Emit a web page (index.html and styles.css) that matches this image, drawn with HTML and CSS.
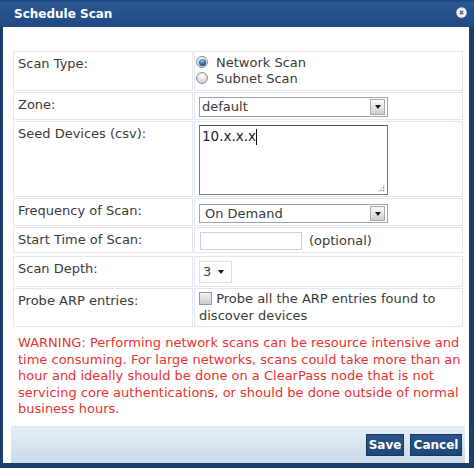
FILE: index.html
```html
<!DOCTYPE html>
<html>
<head>
<meta charset="utf-8">
<link rel="stylesheet" href="styles.css">
</head>
<body>
<div class="dialog">
  <div class="titlebar">
    <span class="title">Schedule Scan</span>
    <span class="close"><svg width="11" height="11" viewBox="0 0 11 11"><circle cx="5.5" cy="5.5" r="5.2" fill="#eef2f7"/><path d="M3.8 3.8 L7.2 7.2 M7.2 3.8 L3.8 7.2" stroke="#5a6470" stroke-width="1.3"/></svg></span>
  </div>
  <div class="panel">
    <div class="form form-a">
      <div class="label">Scan Type:</div>
      <div class="field f-type">
        <div class="opt"><span class="radio on"></span>Network Scan</div>
        <div class="opt"><span class="radio"></span>Subnet Scan</div>
      </div>
      <div class="label">Zone:</div>
      <div class="field f-zone">
        <div class="select wide zone"><span class="val">default</span><span class="arrowbox"><span class="tri"></span></span></div>
      </div>
      <div class="label">Seed Devices (csv):</div>
      <div class="field f-seed">
        <div class="textarea"><span class="ta-text">10.x.x.x</span><span class="caret"></span><span class="grip"></span></div>
      </div>
      <div class="label">Frequency of Scan:</div>
      <div class="field f-freq">
        <div class="select wide freq"><span class="val">On Demand</span><span class="arrowbox"><span class="tri"></span></span></div>
      </div>
      <div class="label">Start Time of Scan:</div>
      <div class="field f-start">
        <div class="textinput"></div><span class="hint">(optional)</span>
      </div>
    </div>
    <div class="form form-b">
      <div class="label">Scan Depth:</div>
      <div class="field f-depth">
        <div class="mini-select"><span class="val">3</span><span class="tri"></span></div>
      </div>
      <div class="label">Probe ARP entries:</div>
      <div class="field f-probe">
        <span class="checkbox"></span> Probe all the ARP entries found to discover devices
      </div>
    </div>
    <div class="warning">WARNING: Performing network scans can be resource intensive and<br>time consuming. For large networks, scans could take more than an<br>hour and ideally should be done on a ClearPass node that is not<br>servicing core authentications, or should be done outside of normal<br>business hours.</div>
    <div class="footer">
      <button class="btn save">Save</button>
      <button class="btn cancel">Cancel</button>
    </div>
  </div>
</div>
</body>
</html>
```

FILE: styles.css
```css
* { box-sizing: border-box; }
html, body { margin: 0; padding: 0; background: #fff; }
body {
  font-family: "DejaVu Sans", Verdana, sans-serif;
  font-size: 13px;
  color: #3a3a3a;
}
.dialog {
  width: 474px;
  height: 468px;
  background: #1b3e6c;
  display: flex;
  flex-direction: column;
}
.titlebar {
  height: 27px;
  flex: none;
  background: linear-gradient(#1d4276 0, #2a5791 3px, #24508a 60%, #1f4880 100%);
  display: flex;
  align-items: center;
  justify-content: space-between;
  padding: 1px 7px 0 14px;
}
.title {
  color: #fff;
  font-weight: bold;
  font-size: 12px;
}
.close { display: flex; margin-top: -3px; }
.panel {
  flex: 1;
  margin: 0 5px 5px 3px;
  background: #fff;
  display: flex;
  flex-direction: column;
  padding: 24px 4px 0 8px;
}
.form {
  display: grid;
  grid-template-columns: 180px 1fr;
  gap: 1px;
  margin: 0 2px;
}
.form-a { grid-template-rows: 40px 28px 76px 28px 26px; }
.form-b { grid-template-rows: 31px 39px; margin-top: 3px; }
.label, .field {
  border: 1px solid #e2e8f1;
}
.label {
  padding: 4px 5px 0 4px;
  line-height: 16px;
  white-space: nowrap;
}
.field { padding: 0 4px; line-height: 16px; }

.f-type { padding: 3px 4px 0 1px; }
.opt { display: flex; align-items: center; height: 16px; }
.radio {
  width: 12px; height: 12px;
  border-radius: 50%;
  border: 1px solid #8f8f8f;
  background: radial-gradient(circle at 50% 30%, #ffffff, #cfcfcf 80%);
  margin-right: 8px;
  display: inline-block;
  position: relative;
  flex: none;
  margin-top: -2px;
}
.radio.on::after {
  content: "";
  position: absolute;
  left: 1.5px; top: 1.5px;
  width: 7px; height: 7px;
  border-radius: 50%;
  background: radial-gradient(circle at 45% 30%, #9cc8f0 0, #2e6db3 45%, #0f3d75 100%);
}

.f-zone { padding-top: 4px; }
.f-freq { padding-top: 5px; }
.select {
  position: relative;
  height: 20px;
  border: 1px solid #9ea4ab;
  background: #fff;
  display: flex;
  align-items: center;
}
.select.wide { width: 189px; }
.select.freq { height: 19px; }
.zone .val { padding-left: 2px; }
.freq .val { padding-left: 5px; }
.arrowbox {
  position: absolute;
  right: 2px; top: 1px; bottom: 1px;
  width: 15px;
  border: 1px solid #a9a9a9;
  background: linear-gradient(#fafafa, #cfcfcf);
  display: flex;
  align-items: center;
  justify-content: center;
}
.tri {
  width: 0; height: 0;
  border-left: 3.5px solid transparent;
  border-right: 3.5px solid transparent;
  border-top: 4px solid #1a1a1a;
}

.f-seed { padding-top: 3px; }
.textarea {
  position: relative;
  width: 189px;
  height: 70px;
  border: 1px solid #7a7a7a;
  border-top-color: #555;
  background: #fff;
  padding: 2px 0 0 2px;
  font-size: 13.5px;
  color: #222;
  display: flex;
  align-items: flex-start;
}
.ta-text { line-height: 17px; }
.caret {
  width: 1px; height: 16px;
  background: #111;
  margin-top: 1px;
}
.grip {
  position: absolute;
  right: 2px; bottom: 2px;
  width: 8px; height: 8px;
  background:
    radial-gradient(circle, #8a8a8a 0.8px, transparent 0.9px) 0 0 / 2.6px 2.6px;
  clip-path: polygon(100% 0, 100% 100%, 0 100%);
}

.f-start { padding-top: 4px; display: flex; align-items: flex-start; }
.textinput {
  width: 102px; height: 18px;
  margin-left: 1px;
  border: 1px solid #cfcfcf;
  background: #fff;
}
.hint { margin-left: 7px; line-height: 17px; }

.f-depth { padding-top: 4px; }
.mini-select {
  width: 33px; height: 22px;
  border: 1px solid #dedede;
  background: #fff;
  display: flex;
  align-items: center;
  padding-left: 3px;
  gap: 7px;
}

.f-probe { padding-top: 1px; line-height: 17px; }
.checkbox {
  display: inline-block;
  width: 13px; height: 13px;
  border: 1px solid #9a9a9a;
  background: linear-gradient(#f2f2f2, #cdcdcd);
  vertical-align: -2px;
}

.warning {
  margin-top: 8px;
  padding-left: 7px;
  color: #e8322e;
  line-height: 16.6px;
  white-space: nowrap;
}
.footer {
  margin-top: auto;
  height: 37px;
  background: linear-gradient(#e6edf6, #cbd9ea);
  border-top: 1px solid #dbe4ef;
  display: flex;
  justify-content: flex-end;
  align-items: center;
  gap: 6px;
  padding-right: 3px;
}
.btn {
  height: 22px;
  padding: 0;
  border: 1px solid #163a66;
  background: linear-gradient(#2a5589, #1f4675);
  color: #fff;
  font-family: "DejaVu Sans", Verdana, sans-serif;
  font-weight: bold;
  font-size: 12px;
}
.save { width: 38px; }
.cancel { width: 52px; }
```
